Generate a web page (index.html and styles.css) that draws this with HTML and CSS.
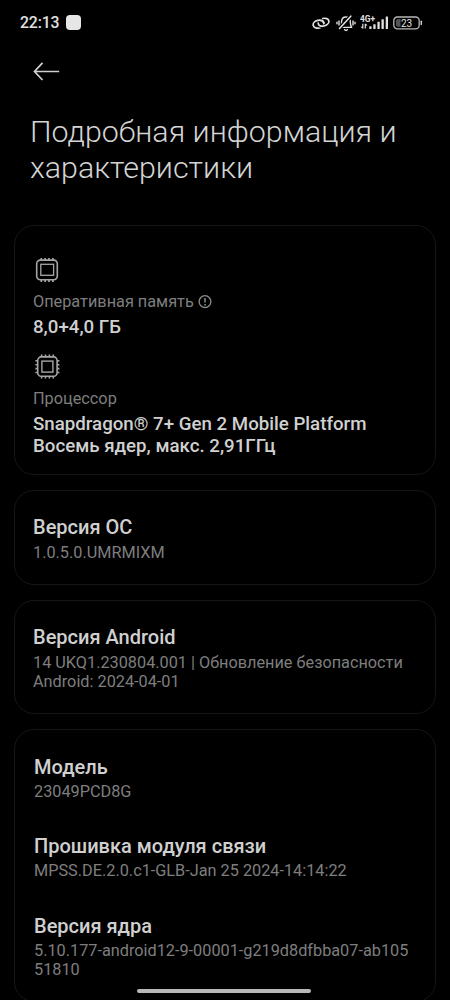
FILE: index.html
```html
<!DOCTYPE html>
<html lang="ru">
<head>
<meta charset="utf-8">
<title>Подробная информация и характеристики</title>
<link rel="stylesheet" href="styles.css">
</head>
<body>
<div class="screen">
  <header class="status">
    <span class="clock">22:13</span>
    <span class="app-dot"></span>
    <span class="spacer"></span>
    <svg class="link-icon" width="18" height="14" viewBox="0 0 18 14">
      <g fill="none" stroke-linecap="round">
        <ellipse cx="6.500" cy="8.200" rx="5.400" ry="3.900" transform="rotate(-12 6.500 8.200)" stroke="#e2e2e2" stroke-width="1.700"/>
        <path d="M6.400 8.600C7.200 10.300 9.400 10.700 11.900 10C15 9.200 17.200 7 16.900 4.900C16.600 2.800 13.700 1.800 10.700 2.500C9.300 2.800 8 3.400 7.200 4.200" stroke="#000" stroke-width="3"/>
        <path d="M6.200 7.200C6.300 9.500 8.600 10.700 11.900 10C15 9.200 17.200 7 16.900 4.900C16.600 2.800 13.700 1.800 10.700 2.500" stroke="#e2e2e2" stroke-width="1.700"/>
        <path d="M6.200 4.300C9.200 3.800 11.700 4.800 11.900 6.800" stroke="#e2e2e2" stroke-width="1.700"/>
      </g>
    </svg>
    <svg class="bell-icon" width="20" height="18" viewBox="0 0 20 18">
      <g fill="none" stroke="#e2e2e2" stroke-width="1.400" stroke-linecap="round" stroke-linejoin="round">
        <path d="M4.300 13.400C5.800 11.500 5.500 9.500 5.600 7.600C5.700 4.800 7.400 3 9.900 3C12.600 3 14.200 4.900 14.300 7.600C14.400 9.900 14.300 11.700 15.700 13.400Z"/>
        <path d="M2.900 15 15.400 1.600" stroke="#000" stroke-width="4"/>
        <path d="M3.500 14.500 14.800 2.200" stroke-width="1.600"/>
        <path d="M8.600 15.800c.8.700 2 .7 2.800 0M3 7v4M1 8.200v1.600M17 7v4M19 8.200v1.600"/>
      </g>
    </svg>
    <svg class="signal-icon" width="30" height="17" viewBox="0 0 30 17">
      <text class="net" x="0" y="7.600" textLength="15" lengthAdjust="spacingAndGlyphs">4G+</text>
      <g fill="#e2e2e2">
        <path d="M2.200 9.700h1.200v4.900H2.200L.6 12.800h1.600zM4.700 14.600V9.700h1.200l1.600 1.800H5.900v3.100z"/>
        <rect x="9.300" y="12.300" width="2.300" height="2.700" rx=".4"/>
        <rect x="13.300" y="10.200" width="2.300" height="4.800" rx=".4"/>
        <rect x="17.400" y="7.700" width="2.300" height="7.300" rx=".4"/>
        <rect x="21.500" y="5.200" width="2.300" height="9.800" rx=".4"/>
        <rect x="25.700" y="2.500" width="2.300" height="12.500" rx=".4"/>
      </g>
    </svg>
    <svg class="battery-icon" width="30" height="14" viewBox="0 0 30 14">
      <rect x=".8" y="1" width="25.400" height="11.800" rx="3.600" fill="none" stroke="#b8b8b8" stroke-width="1.300"/>
      <path d="M5 3h2.500v7.800H5A2 2 0 0 1 3 8.800V5a2 2 0 0 1 2-2z" fill="#555"/>
      <path d="M28.300 5.200v3.400" stroke="#c9c9c9" stroke-width="1.500" stroke-linecap="round"/>
      <text class="level" x="13.600" y="10.600" text-anchor="middle">23</text>
    </svg>
  </header>

  <nav class="nav">
    <svg width="28" height="20" viewBox="0 0 28 20">
      <path d="M10.500 1.800 2.500 10.500 10.500 19M2.500 10.500H27.200" fill="none" stroke="#d0d0d0" stroke-width="1.700"/>
    </svg>
  </nav>

  <h1 class="title">Подробная информация и<br>характеристики</h1>

  <main class="cards">
    <section class="card hardware">
      <svg class="chip" width="28" height="25" viewBox="0 0 28 25">
        <g fill="none" stroke="#a6a6a6">
          <rect x="3.700" y="3.100" width="20.600" height="19.600" rx="3.600" stroke-width="1.600"/>
          <rect x="7.800" y="7.300" width="12.800" height="11" stroke-width="1.300"/>
          <path d="M8.300.9v2.200M12.200.9v2.200M16 .9v2.200M19.900.9v2.200M8.300 22.700v2.200M12.200 22.700v2.200M16 22.700v2.200M19.900 22.700v2.200" stroke-width="1.700"/>
        </g>
      </svg>
      <div class="label ram"><span>Оперативная память</span>
        <svg width="14" height="14" viewBox="0 0 14 14"><circle cx="7" cy="6.600" r="5.900" fill="none" stroke="#8c8c8c" stroke-width="1.300"/><path d="M7 2.900v4.700M7 9.100v1.400" stroke="#8c8c8c" stroke-width="1.500"/></svg>
      </div>
      <div class="value">8,0+4,0 ГБ</div>
      <svg class="chip second" width="28" height="25" viewBox="0 0 28 25">
        <g fill="none" stroke="#a6a6a6">
          <rect x="4.700" y="2.900" width="19.400" height="19.400" rx="3.600" stroke-width="1.600"/>
          <rect x="8.900" y="7.100" width="11" height="11" stroke-width="1.400"/>
          <path d="M8.600.6v2.300M12.500.6v2.300M16.400.6v2.300M20.300.6v2.300M8.600 22.300v2.300M12.500 22.300v2.300M16.400 22.300v2.300M20.300 22.300v2.300M2.400 6.800h2.300M2.400 10.700h2.300M2.400 14.600h2.300M2.400 18.500h2.300M24.100 6.800h2.300M24.100 10.700h2.300M24.100 14.600h2.300M24.100 18.500h2.300" stroke-width="1.600"/>
        </g>
      </svg>
      <div class="label">Процессор</div>
      <div class="value">Snapdragon® 7+ Gen 2 Mobile Platform<br>Восемь ядер, макс. 2,91ГГц</div>
    </section>

    <section class="card os">
      <div class="entry"><h2>Версия ОС</h2><p>1.0.5.0.UMRMIXM</p></div>
    </section>

    <section class="card android">
      <div class="entry"><h2>Версия Android</h2><p>14 UKQ1.230804.001 | Обновление безопасности<br>Android: 2024-04-01</p></div>
    </section>

    <section class="card device">
      <div class="entry"><h2>Модель</h2><p>23049PCD8G</p></div>
      <div class="entry"><h2>Прошивка модуля связи</h2><p>MPSS.DE.2.0.c1-GLB-Jan 25 2024-14:14:22</p></div>
      <div class="entry"><h2>Версия ядра</h2><p>5.10.177-android12-9-00001-g219d8dfbba07-ab105<br>51810</p></div>
    </section>
  </main>
  <div class="home-bar"></div>
</div>
</body>
</html>
```

FILE: styles.css
```css
* { box-sizing: border-box; }
html, body { margin: 0; background: #000; overflow: hidden; }
.screen {
  position: relative;
  width: 450px;
  height: 1000px;
  overflow: hidden;
  background: #000;
  color: #d0d0d0;
  font-family: Roboto, "Noto Sans", sans-serif;
  white-space: nowrap;
}
svg { display: block; flex: none; }
.status { display: flex; align-items: center; height: 45px; padding: 0 27px 0 20px; }
.clock { font-size: 15.8px; font-weight: 500; letter-spacing: -0.15px; color: #e2e2e2; }
.app-dot { width: 15px; height: 15px; margin-left: 7px; border-radius: 4px; background: #e6e6e6; }
.spacer { flex: 1; }
.bell-icon { margin-left: 6px; }
.signal-icon { margin-left: 4px; }
.battery-icon { margin-left: 3px; }
.net { font-size: 8.6px; font-weight: 700; fill: #e2e2e2; }
.level { font-size: 10px; font-weight: 400; fill: #e2e2e2; }
.nav { height: 68px; padding: 16px 0 0 32px; }
.title { margin: 0; padding: 0.6px 0 0 30px; height: 112px; font-size: 30.4px; line-height: 36px; font-weight: 300; color: #d4d4d4; }
.cards { display: flex; flex-direction: column; gap: 15px; padding: 0 14px; }
.card { flex: none; border: 1px solid #161616; border-radius: 20px; padding: 0 18px; }
.hardware { height: 250px; padding-top: 31px; }
.os { height: 95px; padding-top: 24px; }
.android { height: 114px; padding-top: 24px; }
.device { height: 273px; padding: 25px 19px 0; }
.label { height: 19px; margin-top: 10px; font-size: 16.3px; line-height: 19px; color: #7e7e7e; }
.ram { display: flex; align-items: center; gap: 4px; }
.value { margin-top: 5px; font-size: 18.7px; line-height: 22px; font-weight: 500; }
.second { margin-top: 16px; }
.entry h2 { margin: 0; font-size: 20px; line-height: 24px; font-weight: 500; }
.entry p { margin: 4px 0 0; font-size: 16.27px; line-height: 19px; color: #7e7e7e; }
.device .entry p { margin-top: 3px; }
.entry + .entry { margin-top: 33.4px; }
.home-bar { position: absolute; left: 137px; top: 989px; width: 174px; height: 4px; border-radius: 2px; background: #b8b8b8; }
```
